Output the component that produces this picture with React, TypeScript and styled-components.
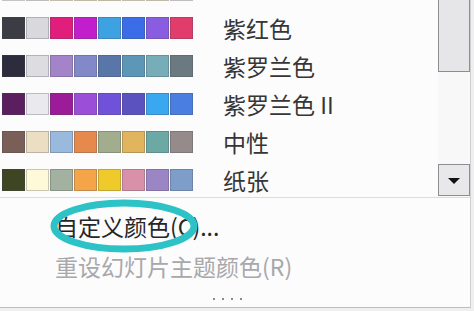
import React from "react";
import styled, { createGlobalStyle } from "styled-components";

const GlobalStyle = createGlobalStyle`
  html, body { margin: 0; padding: 0; background: #efeff0; }
  body { font-family: "Noto Sans CJK SC", "Noto Sans", sans-serif; }
`;

const Panel = styled.div`
  position: relative;
  width: 471px;
  height: 308px;
  box-sizing: border-box;
  background: #fcfcfd;
  border-right: 1px solid #cfcfd2;
  border-bottom: 1px solid #bdbdc0;
  display: flex;
  flex-direction: column;
  overflow: hidden;
`;

const Top = styled.div`
  display: flex;
  height: 197px;
`;

const Viewport = styled.div`
  flex: 1;
  overflow: hidden;
`;

const List = styled.div`
  display: flex;
  flex-direction: column;
  margin-top: -29px;
`;

const Row = styled.div`
  height: 38px;
  display: flex;
  align-items: center;
  padding-left: 2px;
`;

const Swatches = styled.div`
  display: flex;
  gap: 1px;
`;

const Swatch = styled.div<{ $c: string }>`
  width: 23px;
  height: 22px;
  background: ${(p) => p.$c};
  box-shadow: inset 0 0 0 1px rgba(70, 70, 80, 0.28);
`;

const Label = styled.span`
  margin-left: 30px;
  font-size: 23px;
  line-height: 38px;
  color: #363636;
  white-space: nowrap;
`;

const Scrollbar = styled.div`
  width: 32px;
  display: flex;
  flex-direction: column;
  background: #f8f8f9;
`;

const Thumb = styled.div`
  height: 72px;
  box-sizing: border-box;
  border: 1px solid #8e8e92;
  border-top: none;
  background: #e6e6e9;
`;

const Track = styled.div`
  flex: 1;
`;

const DownButton = styled.div`
  height: 32px;
  margin-bottom: 1px;
  box-sizing: border-box;
  border: 1px solid #8e8e92;
  background: #e8e8ea;
  display: flex;
  align-items: center;
  justify-content: center;
`;

const Arrow = styled.div`
  width: 0;
  height: 0;
  border-left: 6px solid transparent;
  border-right: 6px solid transparent;
  border-top: 6px solid #111;
  margin-top: 1px;
`;

const Separator = styled.div`
  height: 1px;
  background: #dcdcdf;
`;

const Menu = styled.div`
  display: flex;
  flex-direction: column;
  padding: 8px 0 0 55px;
`;

const MenuItem = styled.div<{ $disabled?: boolean }>`
  height: 40px;
  font-size: 23px;
  line-height: 40px;
  color: ${(p) => (p.$disabled ? "#a8a8ab" : "#262626")};
  white-space: nowrap;
`;

const Grip = styled.div`
  display: flex;
  gap: 7px;
  margin: 12px 0 0 158px;
`;

const Dot = styled.span`
  width: 2px;
  height: 2px;
  background: #8a8a8e;
`;

const Annotation = styled.svg`
  position: absolute;
  left: 46px;
  top: 196px;
  pointer-events: none;
`;

const rows: { label: string; colors: string[] }[] = [
  {
    label: "",
    colors: ["#f6f6f6", "#ececec", "#f5ecd2", "#f2e8c8", "#efe4c4", "#f3ead0", "#f1e7cc", "#ededea"],
  },
  {
    label: "紫红色",
    colors: ["#3c3c45", "#d9d9dd", "#e21e7c", "#c21ecb", "#3ea2e2", "#3b6de8", "#8a5de0", "#e13c6b"],
  },
  {
    label: "紫罗兰色",
    colors: ["#2c2c3d", "#dcdce1", "#a384c8", "#8189c8", "#5877a8", "#5d97b8", "#77adb9", "#6b7a80"],
  },
  {
    label: "紫罗兰色 II",
    colors: ["#5b1f60", "#e9e9ee", "#9b1b98", "#9b4fd9", "#7051d9", "#5b51bf", "#3aa8f1", "#4b7ee1"],
  },
  {
    label: "中性",
    colors: ["#7a5e58", "#ebdec2", "#99b9dd", "#e5894c", "#a1ad8d", "#e1b55d", "#6ca9a5", "#958b8b"],
  },
  {
    label: "纸张",
    colors: ["#3e4522", "#fdf9d9", "#a3b1a0", "#f4a449", "#f0c92a", "#d990a9", "#9b85c4", "#7f9dc9"],
  },
];

export default function App() {
  return (
    <>
      <GlobalStyle />
      <Panel>
        <Top>
          <Viewport>
            <List>
              {rows.map((r, i) => (
                <Row key={i}>
                  <Swatches>
                    {r.colors.map((c, j) => (
                      <Swatch key={j} $c={c} />
                    ))}
                  </Swatches>
                  {r.label && <Label>{r.label}</Label>}
                </Row>
              ))}
            </List>
          </Viewport>
          <Scrollbar>
            <Thumb />
            <Track />
            <DownButton>
              <Arrow />
            </DownButton>
          </Scrollbar>
        </Top>
        <Separator />
        <Menu>
          <MenuItem>自定义颜色(C)...</MenuItem>
          <MenuItem $disabled>重设幻灯片主题颜色(R)</MenuItem>
          <Grip>
            <Dot />
            <Dot />
            <Dot />
            <Dot />
          </Grip>
        </Menu>
        <Annotation width="160" height="62" viewBox="0 0 160 62">
          <ellipse
            cx="78"
            cy="30"
            rx="70"
            ry="23"
            fill="none"
            stroke="#2cc2c6"
            strokeWidth="7"
          />
        </Annotation>
      </Panel>
    </>
  );
}
